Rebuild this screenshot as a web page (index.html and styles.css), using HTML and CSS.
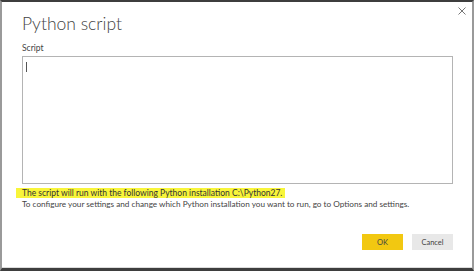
FILE: index.html
```html
<!DOCTYPE html>
<html>
<head>
<meta charset="utf-8">
<link rel="stylesheet" href="styles.css">
</head>
<body>
<div class="frame">
  <div class="dialog">
    <button class="close" aria-label="Close">
      <svg width="8" height="8" viewBox="0 0 8 8"><path d="M0.5 0.5L7.5 7.5M7.5 0.5L0.5 7.5" stroke="#777" stroke-width="1" fill="none"/></svg>
    </button>
    <h1 class="title">Python script</h1>
    <label class="label">Script</label>
    <div class="editor"><span class="caret"></span></div>
    <p class="note"><span class="hl">The script will run with the following Python installation C:\Python27.</span></p>
    <p class="info">To configure your settings and change which Python installation you want to run, go to Options and settings.</p>
    <div class="actions">
      <button class="btn ok">OK</button>
      <button class="btn cancel">Cancel</button>
    </div>
  </div>
</div>
</body>
</html>
```
FILE: styles.css
```css
html, body {
  margin: 0;
  padding: 0;
  background: #3e3e3e;
}
.frame {
  width: 474px;
  height: 271px;
  box-sizing: border-box;
  border-top: 2px solid #3e3e3e;
  border-left: 2px solid #9a9a9a;
  border-right: 2px solid #9a9a9a;
  border-bottom: 3px solid #3e3e3e;
  background: #fff;
}
.dialog {
  position: relative;
  height: 100%;
  box-sizing: border-box;
  border-bottom: 1px solid #dcdcdc;
  padding: 0 19px 0 20px;
  display: flex;
  flex-direction: column;
  font-family: Lato, "Open Sans", sans-serif;
  color: #3b3b3b;
}
.close {
  position: absolute;
  top: 5px;
  right: 6px;
  width: 8px;
  height: 8px;
  padding: 0;
  border: 0;
  background: transparent;
  display: flex;
}
.title {
  margin: 10px 0 0 0;
  font-size: 17.5px;
  font-weight: 300;
  line-height: 24px;
  color: #444;
}
.label {
  margin-top: 7px;
  font-size: 8.5px;
  line-height: 10px;
  color: #444;
}
.editor {
  margin-top: 3px;
  height: 128px;
  border: 1px solid #b4b4b4;
  box-sizing: border-box;
  padding: 5px 3px;
}
.caret {
  display: block;
  width: 1px;
  height: 10px;
  background: #555;
}
.note {
  margin: 4px 0 0 -6px;
  font-size: 8.5px;
  line-height: 10px;
  color: #333;
}
.hl {
  background: #f8f53a;
  padding: 0 3px 0 6px;
  display: inline-block;
}
.info {
  margin: 1px 0 0 0;
  font-size: 8.2px;
  line-height: 11px;
  color: #444;
}
.actions {
  margin-top: 24px;
  display: flex;
  justify-content: flex-end;
  gap: 9px;
}
.btn {
  height: 16px;
  border: 0;
  padding: 0;
  font-family: Lato, "Open Sans", sans-serif;
  font-size: 7.5px;
  color: #444;
}
.ok {
  width: 41px;
  background: #f2c811;
}
.cancel {
  width: 41px;
  background: #e8e8e8;
}
```
